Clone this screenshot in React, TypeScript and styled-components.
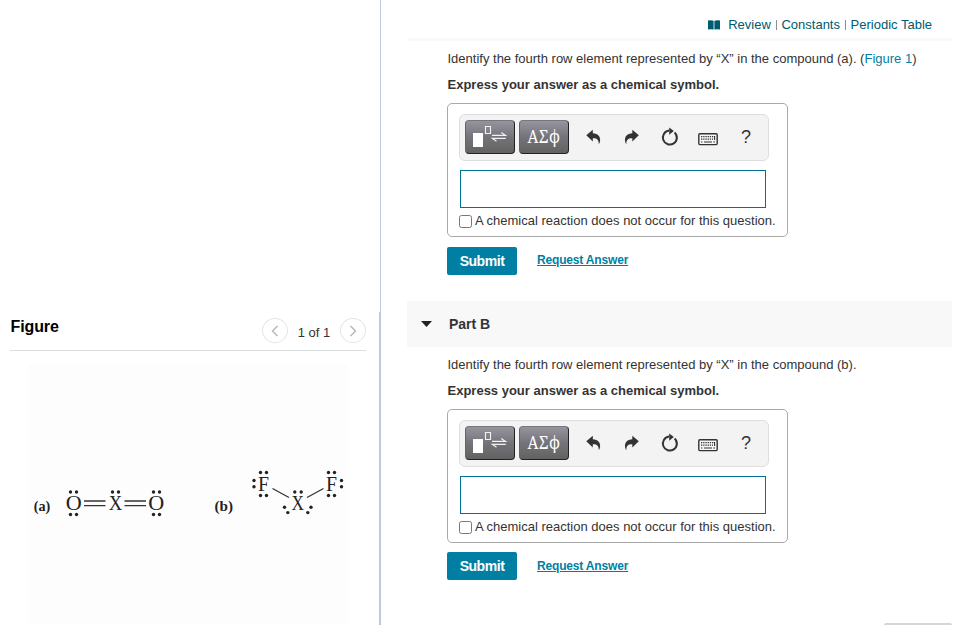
import React from "react";
import styled, { createGlobalStyle } from "styled-components";

const Global = createGlobalStyle`
  * { box-sizing: border-box; }
  html, body { margin: 0; background: #fff; overflow: hidden; }
  body { font-family: "Liberation Sans", Arial, sans-serif; font-size: 13px; color: #333; }
`;

const Page = styled.div`
  display: flex;
  width: 969px;
  height: 625px;
  overflow: hidden;
`;

const Left = styled.aside`
  width: 381px;
  display: flex;
  flex-direction: column;
  flex: none;
`;

const LeftTop = styled.div`
  height: 312px;
  border-right: 1px solid #b9cbdc;
`;

const FigurePane = styled.section`
  height: 313px;
  padding: 0 13px 0 10px;
  border-right: 2px solid #b9cbdc;
`;

const FigureHeader = styled.header`
  display: flex;
  height: 39px;
  border-bottom: 1px solid #d9dcde;
`;

const FigureTitle = styled.h2`
  margin: 5px auto 0 0;
  padding-left: 0.5px;
  font-size: 16px;
  line-height: 20px;
  letter-spacing: -0.1px;
  color: #000;
`;

const Pager = styled.div`
  display: flex;
  margin-top: 6px;
`;

const PagerButton = styled.button`
  display: flex;
  align-items: center;
  justify-content: center;
  width: 26px;
  height: 25px;
  padding: 0;
  border: 1px solid #e2e4e6;
  border-radius: 50%;
  background: #fff;
`;

const PagerText = styled.span`
  width: 52px;
  padding-top: 7px;
  text-align: center;
  line-height: 16px;
  white-space: nowrap;
`;

const FigureImage = styled.div`
  width: 320px;
  height: 261px;
  margin: 13px 0 0 18px;
  background: #fdfdfd;
`;

const Right = styled.main`
  width: 545px;
  margin-left: 26px;
  display: flex;
  flex-direction: column;
`;

const TopLinks = styled.nav`
  display: flex;
  height: 41px;
  flex: none;
  justify-content: flex-end;
  padding: 17px 20px 0 0;
  border-bottom: 3px solid #f9f9f9;
  line-height: 16px;
`;

const BookIcon = styled.svg`
  width: 12px;
  height: 10px;
  margin: 3px 8px 0 0;
`;

const Divider = styled.span`
  width: 1px;
  height: 10px;
  margin: 3px 4.6px 0 5px;
  background: #8c8c8c;
`;

const Link = styled.a<{ $dark?: boolean }>`
  color: ${(p) => (p.$dark ? "#005a70" : "#007fa3")};
`;

const Part = styled.section<{ $height: number }>`
  height: ${(p) => p.$height}px;
  flex: none;
  padding: 10px 0 0 40px;
`;

const Line = styled.p<{ $bold?: boolean }>`
  margin: 0;
  padding-left: 0.5px;
  height: 26px;
  line-height: 16px;
  white-space: nowrap;
  font-weight: ${(p) => (p.$bold ? 700 : 400)};
`;

const AnswerBox = styled.div`
  width: 341px;
  height: 134px;
  padding: 10px 11px 0;
  border: 1px solid #a9a9a9;
  border-radius: 5px;
`;

const Toolbar = styled.div`
  display: flex;
  width: 310px;
  height: 47px;
  padding: 5px;
  border: 1px solid #dedede;
  border-radius: 6px;
  background: #f3f3f3;
`;

const PaletteButton = styled.button`
  width: 50px;
  height: 34px;
  flex: none;
  padding: 0;
  margin-right: 4px;
  border: 1px solid;
  border-color: #77747c #222 #222 #66646a;
  border-radius: 4px;
  background: linear-gradient(#97949e, #75737a 50%, #626262);
  color: #fff;
`;

const GreekText = styled.span`
  display: block;
  padding-bottom: 2px;
  font: 17.5px/30px "Noto Serif", "DejaVu Serif", "Liberation Serif", serif;
  letter-spacing: 0.8px;
  transform: scaleX(0.88);
`;

const PaletteIcon = styled.svg`
  display: block;
  width: 48px;
  height: 32px;
`;

const ToolIcons = styled.svg`
  display: block;
  width: 160px;
  height: 34px;
  margin-left: -4px;
  flex: none;
`;

const Help = styled.span`
  margin-left: 12px;
  font-size: 18px;
  line-height: 34px;
  color: #333;
`;

const AnswerInput = styled.input`
  display: block;
  width: 306px;
  height: 38px;
  margin: 9px 0 0 1px;
  border: 1px solid #007095;
  border-radius: 0;
  background: #fff;
`;

const CheckLabel = styled.label`
  display: flex;
  height: 25px;
  padding-top: 5px;
  line-height: 16px;
  white-space: nowrap;
`;

const Checkbox = styled.input`
  appearance: none;
  flex: none;
  width: 13px;
  height: 13px;
  margin: 2px 3px 0 0;
  border: 1px solid #777;
  border-radius: 2.5px;
  background: #fff;
`;

const Actions = styled.div`
  display: flex;
  height: 28px;
`;

const Submit = styled.button<{ $raised?: boolean }>`
  width: 70px;
  height: 28px;
  margin-top: ${(p) => (p.$raised ? 9 : 10)}px;
  padding: 0;
  border: 0;
  border-radius: 2px;
  background: #007fa3;
  color: #fff;
  font: bold 14px/28px "Liberation Sans", sans-serif;
  letter-spacing: -0.45px;
`;

const Request = styled.a`
  margin: 15px 0 0 20px;
  color: #007fa3;
  font-size: 12px;
  line-height: 16px;
  font-weight: 700;
  letter-spacing: -0.17px;
  text-decoration: underline;
`;

const PartHeader = styled.header`
  display: flex;
  align-items: center;
  height: 46px;
  flex: none;
  padding-left: 14px;
  background: #f8f8f8;
`;

const Caret = styled.svg`
  width: 11px;
  height: 6px;
  margin-right: 17px;
`;

const PartTitle = styled.h3`
  margin: 0;
  font-size: 14px;
  line-height: 18px;
`;

const NextButton = styled.div`
  align-self: flex-end;
  width: 68px;
  height: 20px;
  flex: none;
  border-radius: 2px;
  background: #d6d6d6;
`;

function Chevron({ next }: { next?: boolean }) {
  return (
    <svg width="8" height="12" viewBox="0 0 8 12" fill="none" stroke="#b9b9b9" strokeWidth="1.5">
      <path d={next ? "M1.5 1l5 5-5 5" : "M6.5 1l-5 5 5 5"} />
    </svg>
  );
}

const oxideDots = [
  [70.5, 492], [76.5, 492], [70.5, 514.5], [76.5, 514.5],
  [112.5, 492], [118.5, 492],
  [153.5, 492], [159.5, 492], [153.5, 514.5], [159.5, 514.5],
];
const fluorideDots = [
  [260.5, 472.5], [266.5, 472.5], [254, 480.5], [254, 486.8], [260.5, 495.5], [266.5, 495.5],
  [328.5, 472.5], [334.5, 472.5], [341.5, 480.5], [341.5, 486.8], [328.5, 495.5], [334.5, 495.5],
  [294.8, 492], [301.2, 492], [284.5, 507.3], [287.8, 512.6], [311, 507.3], [307.8, 512.6],
];

function LewisStructures() {
  return (
    <svg width="320" height="261" viewBox="28 364 320 261" fill="#222" fontFamily="Liberation Serif" textAnchor="middle">
      <g fontSize="15.5" fontWeight="700">
        <text x="42" y="510.5" textLength="16.5" lengthAdjust="spacingAndGlyphs">(a)</text>
        <text x="223.8" y="510.5" textLength="18.5" lengthAdjust="spacingAndGlyphs">(b)</text>
      </g>
      <g fontSize="21">
        <text x="73.7" y="510.3" textLength="16" lengthAdjust="spacingAndGlyphs">O</text>
        <text x="115.5" y="510" fontSize="20" textLength="13.5" lengthAdjust="spacingAndGlyphs">X</text>
        <text x="156.2" y="510.3" textLength="16" lengthAdjust="spacingAndGlyphs">O</text>
        <text x="263.5" y="491.2" fontSize="21" textLength="11" lengthAdjust="spacingAndGlyphs">F</text>
        <text x="331.5" y="491.2" fontSize="21" textLength="11" lengthAdjust="spacingAndGlyphs">F</text>
        <text x="297.8" y="510" fontSize="20" textLength="12.5" lengthAdjust="spacingAndGlyphs">X</text>
      </g>
      <path
        d="M84 501H105.5M84 505.7H105.5M124.5 501H146M124.5 505.7H146M272.5 488.5L289 497.5M307 497.5L323.5 488.5"
        stroke="#333" strokeWidth="1.3"
      />
      {[...oxideDots, ...fluorideDots].map(([x, y]) => (
        <circle key={`${x}-${y}`} cx={x} cy={y} r="1.7" />
      ))}
    </svg>
  );
}

function Tools() {
  return (
    <>
      <ToolIcons viewBox="569 120 160 34" fill="#333">
        <path d="M586.3 135.3l6.5-5.6v3.5c5 .2 7.7 3.1 7.3 7.5-.2 1.5-.6 2.5-1.4 3.4.2-4.1-1.5-5.9-5.9-5.8v3.1z" />
        <path d="M638.8 135.3l-6.5-5.6v3.5c-5 .2-7.7 3.1-7.3 7.5.2 1.5.6 2.5 1.4 3.4-.2-4.1 1.5-5.9 5.9-5.8v3.1z" />
        <path d="M674.6 132.4a7 7 0 1 1-5.6-1.8" fill="none" stroke="#333" strokeWidth="2" />
        <path d="M669.2 127.6l4.6 3.4-4.6 3.8z" />
        <rect x="698.8" y="133.8" width="18.4" height="10.8" rx="1" fill="#f7f7f7" stroke="#333" strokeWidth="1.4" />
        <path
          d="M701 136.7h14M701 139.2h12" fill="none" stroke="#333" strokeWidth="1.3" strokeDasharray="1.3 .9"
        />
        <path d="M701 142h1.5M704 142h8M713.3 142h1.7M714.6 136v4" stroke="#333" strokeWidth="1.1" />
      </ToolIcons>
      <Help>?</Help>
    </>
  );
}

function AnswerArea({ raised }: { raised?: boolean }) {
  return (
    <>
      <AnswerBox>
        <Toolbar>
          <PaletteButton aria-label="Templates">
            <PaletteIcon viewBox="466 121 48 32">
              <path d="M473 133h10v14h-10z" fill="#fff" />
              <path d="M485.5 126.5h5v7h-5zM492 135.3h13.5l-4.2-2.8M505.8 138.3h-13.5l4.2 3" fill="none" stroke="#f1f1f1" strokeWidth="1.15" />
            </PaletteIcon>
          </PaletteButton>
          <PaletteButton><GreekText>ΑΣϕ</GreekText></PaletteButton>
          <Tools />
        </Toolbar>
        <AnswerInput aria-label="Answer" />
        <CheckLabel>
          <Checkbox type="checkbox" />
          A chemical reaction does not occur for this question.
        </CheckLabel>
      </AnswerBox>
      <Actions>
        <Submit $raised={raised}>Submit</Submit>
        <Request>Request Answer</Request>
      </Actions>
    </>
  );
}

export default function App() {
  return (
    <Page>
      <Global />
      <Left>
        <LeftTop />
        <FigurePane>
          <FigureHeader>
            <FigureTitle>Figure</FigureTitle>
            <Pager>
              <PagerButton aria-label="Previous"><Chevron /></PagerButton>
              <PagerText>1 of 1</PagerText>
              <PagerButton aria-label="Next"><Chevron next /></PagerButton>
            </Pager>
          </FigureHeader>
          <FigureImage><LewisStructures /></FigureImage>
        </FigurePane>
      </Left>
      <Right>
        <TopLinks>
          <BookIcon viewBox="0 0 12 10" fill="#005a70">
            <path d="M0 .5Q3 -.2 5.6 .7V9.6Q3 8.7 0 9.6zM6.4 .7Q9 -.2 12 .5V9.6Q9 8.7 6.4 9.6z" />
          </BookIcon>
          <Link $dark>Review</Link>
          <Divider />
          <Link $dark>Constants</Link>
          <Divider />
          <Link $dark>Periodic Table</Link>
        </TopLinks>
        <Part $height={260}>
          <Line>
            Identify the fourth row element represented by “X” in the compound (a). (<Link>Figure 1</Link>)
          </Line>
          <Line $bold>Express your answer as a chemical symbol.</Line>
          <AnswerArea />
        </Part>
        <PartHeader>
          <Caret viewBox="0 0 11 6"><path d="M0 0h11L5.5 6z" fill="#222" /></Caret>
          <PartTitle>Part B</PartTitle>
        </PartHeader>
        <Part $height={276}>
          <Line>
            Identify the fourth row element represented by “X” in the compound (b).
          </Line>
          <Line $bold>Express your answer as a chemical symbol.</Line>
          <AnswerArea raised />
        </Part>
        <NextButton />
      </Right>
    </Page>
  );
}
